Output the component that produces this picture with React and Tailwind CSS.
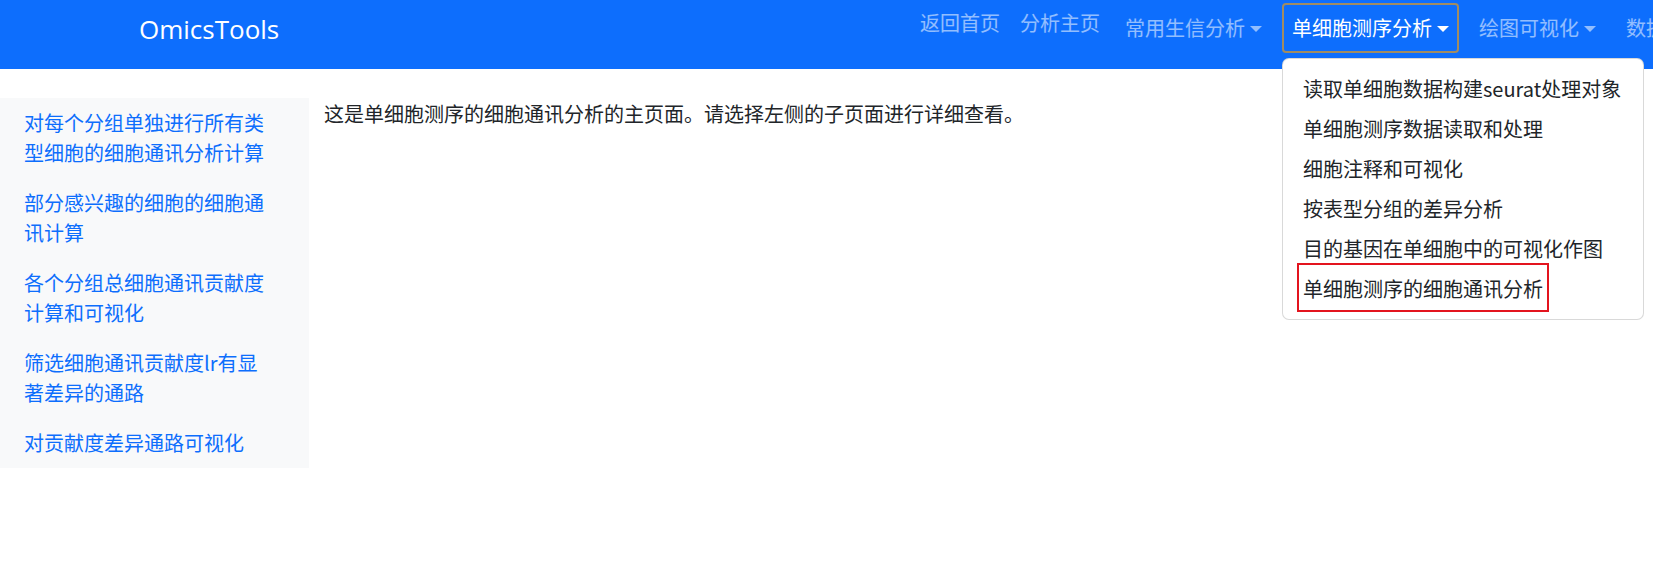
import React from 'react';

const topLinks = ['返回首页', '分析主页'];

const topMenus = [
  { label: '常用生信分析' },
  { label: '单细胞测序分析', open: true },
  { label: '绘图可视化' },
  { label: '数据处理' },
];

const scItems = [
  '读取单细胞数据构建seurat处理对象',
  '单细胞测序数据读取和处理',
  '细胞注释和可视化',
  '按表型分组的差异分析',
  '目的基因在单细胞中的可视化作图',
  '单细胞测序的细胞通讯分析',
];

const sideLinks = [
  '对每个分组单独进行所有类型细胞的细胞通讯分析计算',
  '部分感兴趣的细胞的细胞通讯计算',
  '各个分组总细胞通讯贡献度计算和可视化',
  '筛选细胞通讯贡献度lr有显著差异的通路',
  '对贡献度差异通路可视化',
];

function Caret() {
  return (
    <span className="inline-block ml-[5px] w-0 h-0 border-x-[6px] border-x-transparent border-t-[6px] border-t-current align-middle mb-[3px]" />
  );
}

function DropdownMenu() {
  return (
    <div className="absolute left-[-2px] top-[53px] z-10 w-[362px] bg-white border border-black/15 rounded-[7px] py-[10px]">
      {scItems.map((item, i) => (
        <a
          key={item}
          href="#"
          className="relative block px-[20px] py-[5px] leading-[30px] text-[20px] text-[#212529]"
        >
          {item}
          {i === scItems.length - 1 && (
            <span className="absolute left-[14px] top-[-6px] w-[252px] h-[49px] border-2 border-[#e3141e]" />
          )}
        </a>
      ))}
    </div>
  );
}

export default function App() {
  return (
    <div className="min-h-screen bg-white overflow-x-clip font-['Noto_Sans_CJK_SC','Noto_Sans',sans-serif]">
      <nav className="relative h-[69px] bg-[#0d6efd] flex items-start whitespace-nowrap">
        <div className="flex-none w-[910px] pl-[139px] pt-[14px]">
          <a href="#" className="text-white text-[26px] leading-[30px] font-['Open_Sans',sans-serif]">
            OmicsTools
          </a>
        </div>
        <ul className="flex items-start flex-none">
          {topLinks.map((l) => (
            <li key={l}>
              <a href="#" className="block px-[10px] pt-[8px] text-[20px] leading-[30px] text-white/55">
                {l}
              </a>
            </li>
          ))}
          <li className="flex items-start gap-[10px] ml-[5px]">
            {topMenus.map((m) => (
              <div
                key={m.label}
                className={
                  m.open
                    ? 'relative mt-[3px] border-2 border-[#a08c62] rounded-[4px] px-[8px] py-[8px] text-[20px] leading-[30px] text-white'
                    : 'relative mt-[3px] border-2 border-transparent rounded-[4px] px-[8px] py-[8px] text-[20px] leading-[30px] text-white/55'
                }
              >
                {m.label}
                <Caret />
                {m.open && <DropdownMenu />}
              </div>
            ))}
          </li>
        </ul>
      </nav>

      <div className="flex items-start mt-[29px]">
        <ul className="flex-none w-[309px] bg-[#f8f9fa]">
          {sideLinks.map((s) => (
            <li key={s}>
              <a href="#" className="block pl-[24px] pr-[36px] py-[10px] text-[20px] leading-[30px] text-[#0d6efd]">
                {s}
              </a>
            </li>
          ))}
        </ul>
        <div className="pl-[15px] pt-[1px] text-[20px] leading-[30px] text-[#212529]">
          这是单细胞测序的细胞通讯分析的主页面。请选择左侧的子页面进行详细查看。
        </div>
      </div>
    </div>
  );
}
